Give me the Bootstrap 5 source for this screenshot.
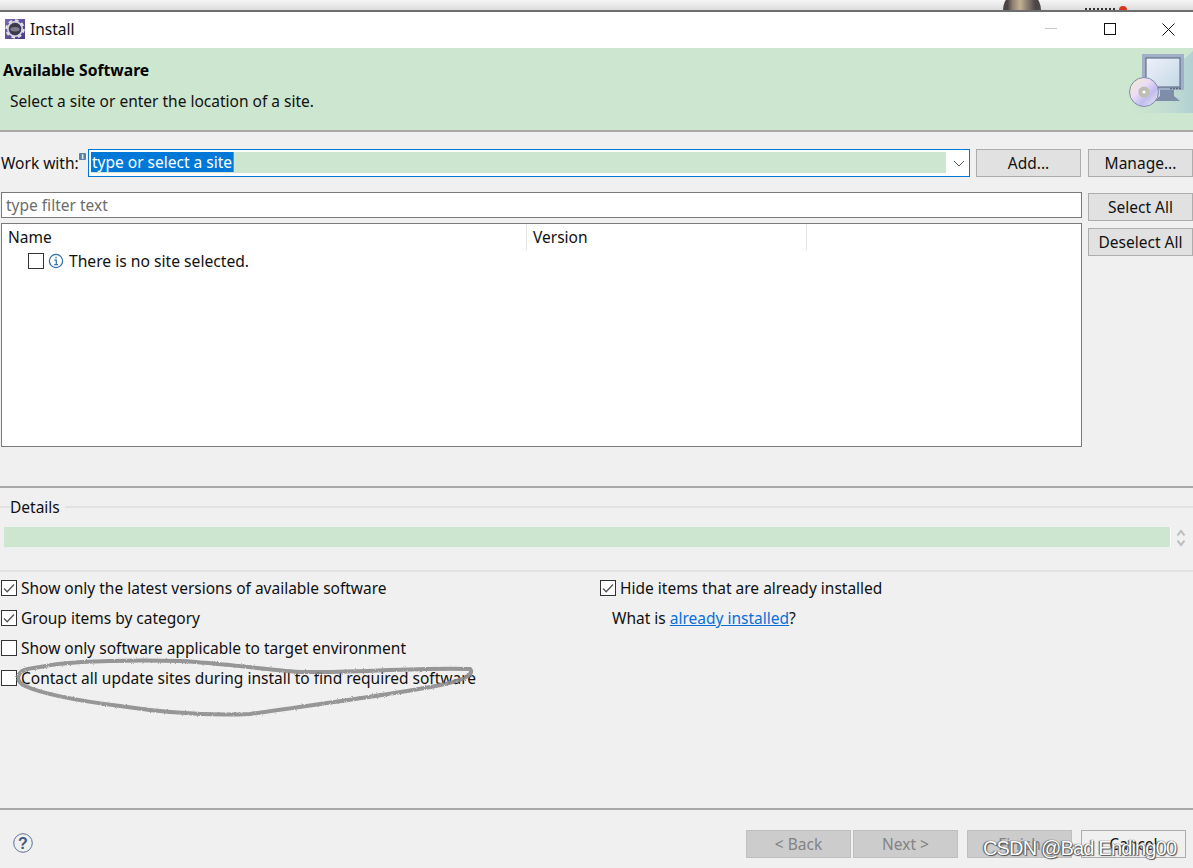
<!DOCTYPE html>
<html lang="en">
<head>
<meta charset="utf-8">
<title>Install</title>
<link href="https://cdn.jsdelivr.net/npm/bootstrap@5.3.0/dist/css/bootstrap.min.css" rel="stylesheet">
<style>
html,body{height:868px;overflow:hidden}
body{background:#f0f0f0;font-family:"Noto Sans","Open Sans",sans-serif;font-size:15.5px;line-height:20px;color:#111;width:1193px;position:relative}
.topstrip{height:10px;background:linear-gradient(#f6f6f6,#dcdcdc);overflow:hidden;padding-left:1003px}
.avatar{width:38px;height:38px;border-radius:50%;background:linear-gradient(90deg,#4a4442 0 12%,#8d7f70 25%,#c4b294 45%,#8f8476 62%,#4c4646 85%);flex:none;margin-top:-9px}
.strokes{margin-left:44px;margin-top:8px;width:31px;height:2px;background:repeating-linear-gradient(90deg,#333 0 2px,transparent 2px 4px)}
.reddot{width:8px;height:8px;border-radius:50%;background:#d8361e;margin-top:6px;margin-left:3px;flex:none}
.titlebar{height:38px;background:#fff;border-top:2px solid #6e6e6e;padding:0 0 2px 5px}
.titlebar .ttl{margin-left:5px}
.winbtn{width:59px;height:36px;flex:none}
.winlast{margin-right:-5px}
.banner{height:84px;background:#cde6cf;border-bottom:2px solid #a9a9a9;padding:11px 0 0 3px}
.banner h1{font-size:15.7px;line-height:22px;font-weight:700;margin:0;color:#000}
.banner p{margin:10px 0 0 7px;line-height:20px}
.wizard-art{right:0;top:3px}
.workrow{height:28px;margin-top:17px;padding-left:1px}
.lbl{width:87px;position:relative;flex:none}
.infotag{position:absolute;left:78px;top:0;width:7px;height:7px;background:#5b7fa6;color:#fff;font-size:7px;line-height:7px;text-align:center;font-weight:700;border-radius:1px}
.combo{width:882px;height:28px;background:#fff;border:1px solid #0078d7;padding:2px 23px 3px 2px;position:relative;flex:none}
.combo-in{background:#cde6cf;height:21px;line-height:21px}
.sel{background:#0078d7;color:#fff;display:inline-block;padding:0 1px;border-right:1px solid #e8701a;height:20px}
.chev{position:absolute;right:4px;top:10px}
.wbtn{background:#e1e1e1;border:1px solid #adadad;border-radius:0;width:105px;height:28px;padding:0;font-size:15.5px;line-height:26px;color:#111;flex:none}
.wbtn.dis,.wbtn.dis:disabled{background:#ccc;border-color:#bfbfbf;color:#838383;opacity:1}
.wbtn.ghost{background:transparent}
.ml6{margin-left:6px}
.ml7{margin-left:7px}
.listarea{margin-top:15px;padding-left:1px}
.leftcol{width:1081px}
.filter{height:26px;width:1081px;background:#fff;border:1px solid #7a7a7a;padding:0 4px;line-height:24px;color:#6d6d6d}
.tree{height:224px;margin-top:5px;background:#fff;border:1px solid #7a7a7a}
.thead{height:26px;line-height:26px}
.th1{width:525px;padding-left:6px;border-right:1px solid #e5e5e5}
.th2{width:280px;padding-left:6px;border-right:1px solid #e5e5e5}
.rowitem{padding-left:26px;height:22px}
.rowtxt{margin-left:5px;font-size:15.65px}
.rightcol{margin-left:6px;margin-top:1px;gap:7px}
.ckbox.form-check-input{width:16px;height:16px;margin:0;border:1px solid #333;border-radius:0;background-color:#fff;flex:none;box-shadow:none}
.ckbox.form-check-input:checked{background-color:#fff;border-color:#333;background-size:14px;background-repeat:no-repeat;background-position:center;background-image:url("data:image/svg+xml,%3Csvg xmlns='http://www.w3.org/2000/svg' viewBox='0 0 14 14'%3E%3Cpath d='M2 7.5l3.2 3.2L12 3.5' fill='none' stroke='%23555' stroke-width='1.3'/%3E%3C/svg%3E")}
.sep1{margin:39px 0 0;border:0;border-top:2px solid #a8a8a8;opacity:1}
.details{height:83px;margin-top:1px;border-bottom:2px solid #e2e2e2;position:relative}
.dleg{padding:7px 0 0 10px;height:20px;line-height:22px}
.dline{position:absolute;left:0;right:0;top:17px;border-top:2px solid #e2e2e2;z-index:0}
.dleg span{position:relative;z-index:1;background:#f0f0f0;padding-right:5px}
.dfield{margin:18px 0 0 4px;height:20px;width:1167px;background:#cde6cf;border-right:1px solid #fff}
.spin{position:absolute;right:7px;top:40px}
.opts{margin-top:1px;height:235px}
.optcol1{width:600px;padding-left:1px}
.optrow{height:30px;gap:4px}
.whatis{padding-left:12px}
.whatis a{color:#0a6fd8}
.sep2{margin:0;border:0;border-top:2px solid #a8a8a8;opacity:1}
.bottombar{height:58px;padding:20px 7px 0 13px}
.helpic{margin-top:3px}
.gap2px{gap:2px}
.mx9{margin:0 9px}
.overlay{position:absolute;left:0;top:0;pointer-events:none}
.wm{position:absolute;left:983px;top:836px;font-size:20px;line-height:24px;color:#fff;letter-spacing:-.83px;font-family:"Liberation Sans",sans-serif;text-shadow:0 0 1px #333,1px 1px 1px #555,-1px 0 1px #666;white-space:nowrap}
</style>
</head>
<body>
<div class="topstrip d-flex">
  <div class="avatar"></div><div class="strokes"></div><div class="reddot"></div>
</div>
<div class="titlebar d-flex align-items-center">
  <svg width="20" height="20" viewBox="0 0 20 20" aria-hidden="true">
    <defs><linearGradient id="pur" x1="0" y1="0" x2="1" y2="1"><stop offset="0" stop-color="#7a68b0"/><stop offset="1" stop-color="#4a3a84"/></linearGradient></defs>
    <rect width="20" height="20" fill="url(#pur)"/>
    <circle cx="10" cy="10" r="8.2" fill="none" stroke="#e2e2e6" stroke-width="3" stroke-dasharray="3.4 3"/>
    <circle cx="10" cy="10" r="7.2" fill="none" stroke="#d6d6dc" stroke-width="1.6"/>
    <circle cx="10" cy="10" r="6" fill="#3b3a48"/>
    <ellipse cx="10" cy="10.3" rx="4.6" ry="2.2" fill="#7d7c8c"/>
  </svg>
  <span class="ttl flex-grow-1">Install</span>
  <div class="winbtn d-flex align-items-center justify-content-center"><svg width="12" height="2"><path d="M0 .5h12" stroke="#c8c8c8"/></svg></div>
  <div class="winbtn d-flex align-items-center justify-content-center"><svg width="12" height="12"><rect x=".5" y=".5" width="11" height="11" fill="none" stroke="#111"/></svg></div>
  <div class="winbtn winlast d-flex align-items-center justify-content-center"><svg width="13" height="13"><path d="M.5.5l12 12M12.5.5l-12 12" stroke="#111"/></svg></div>
</div>
<div class="banner position-relative">
  <h1>Available Software</h1>
  <p>Select a site or enter the location of a site.</p>
  <svg class="wizard-art position-absolute" width="66" height="62" viewBox="0 0 66 62" aria-hidden="true">
    <defs>
      <linearGradient id="scr" x1="0" y1="0" x2="1" y2="1"><stop offset="0" stop-color="#eef1fb"/><stop offset="1" stop-color="#c4d8e6"/></linearGradient>
      <linearGradient id="cd" x1="0" y1="0" x2="1" y2="1"><stop offset="0" stop-color="#f0efc0"/><stop offset=".4" stop-color="#ecdcf6"/><stop offset=".65" stop-color="#c0bcec"/><stop offset="1" stop-color="#f0f2f4"/></linearGradient>
      <linearGradient id="fade" x1="0" y1="0" x2="1" y2="0"><stop offset="0" stop-color="#c4dfd0" stop-opacity="0"/><stop offset="1" stop-color="#b2d0d4"/></linearGradient>
    </defs>
    <path d="M0 62L24 38 66 0v62z" fill="url(#fade)"/>
    <path d="M33 39h14v6l6 5H27l6-5z" fill="#7e8ea8"/>
    <rect x="15" y="3" width="42" height="36" fill="#a0aec6"/>
    <rect x="19" y="7" width="34" height="29" fill="url(#scr)" stroke="#54607c"/>
    <path d="M43 37.5h12" stroke="#5a6880" stroke-width="1.6" stroke-dasharray="2 1"/>
    <circle cx="17" cy="41" r="14.5" fill="url(#cd)" stroke="#7e8cab"/>
    <circle cx="17" cy="41" r="5.6" fill="#bdbdb4"/>
    <circle cx="17" cy="41" r="1.6" fill="#fff"/>
  </svg>
</div>
<div class="workrow d-flex align-items-center">
  <div class="lbl">Work with:<span class="infotag">i</span></div>
  <div class="combo">
    <div class="combo-in"><span class="sel">type or select a site</span></div>
    <svg class="chev" width="12" height="7" viewBox="0 0 12 7"><path d="M1 1l5 5 5-5" fill="none" stroke="#555"/></svg>
  </div>
  <button type="button" class="btn wbtn ml6">Add...</button>
  <button type="button" class="btn wbtn ml7">Manage...</button>
</div>
<div class="listarea d-flex">
  <div class="leftcol">
    <div class="filter">type filter text</div>
    <div class="tree">
      <div class="thead d-flex"><div class="th1">Name</div><div class="th2">Version</div></div>
      <div class="rowitem d-flex align-items-center">
        <input class="form-check-input ckbox" type="checkbox" aria-label="There is no site selected">
        <svg class="ms-1" width="16" height="16" viewBox="0 0 16 16"><circle cx="8" cy="8" r="6.6" fill="none" stroke="#2f6fa8" stroke-width="1.2"/><path d="M8 3.8v1.6M6.4 7.1H8.3v4.2M6.3 11.6h3.6" fill="none" stroke="#2f6fa8" stroke-width="1.2"/></svg>
        <span class="rowtxt">There is no site selected.</span>
      </div>
    </div>
  </div>
  <div class="rightcol d-flex flex-column">
    <button type="button" class="btn wbtn">Select All</button>
    <button type="button" class="btn wbtn">Deselect All</button>
  </div>
</div>
<hr class="sep1">
<div class="details">
  <div class="dline"></div>
  <div class="dleg"><span>Details</span></div>
  <div class="dfield"></div>
  <svg class="spin" width="10" height="18" viewBox="0 0 10 18"><path d="M1.5 6.5L5 2l3.5 4.5M1.5 11.5L5 16l3.5-4.5" fill="none" stroke="#bcbcbc" stroke-width="2"/></svg>
</div>
<div class="opts d-flex">
  <div class="optcol1">
    <div class="optrow d-flex align-items-center"><input class="form-check-input ckbox" type="checkbox" checked aria-label="latest"><span>Show only the latest versions of available software</span></div>
    <div class="optrow d-flex align-items-center"><input class="form-check-input ckbox" type="checkbox" checked aria-label="group"><span>Group items by category</span></div>
    <div class="optrow d-flex align-items-center"><input class="form-check-input ckbox" type="checkbox" aria-label="target"><span>Show only software applicable to target environment</span></div>
    <div class="optrow d-flex align-items-center"><input class="form-check-input ckbox" type="checkbox" aria-label="contact"><span>Contact all update sites during install to find required software</span></div>
  </div>
  <div class="optcol2">
    <div class="optrow d-flex align-items-center"><input class="form-check-input ckbox" type="checkbox" checked aria-label="hide"><span>Hide items that are already installed</span></div>
    <div class="optrow d-flex align-items-center whatis"><span>What is <a href="#">already installed</a>?</span></div>
  </div>
</div>
<hr class="sep2">
<div class="bottombar d-flex">
  <svg class="helpic" width="20" height="20" viewBox="0 0 20 20"><circle cx="10" cy="10" r="9.3" fill="none" stroke="#5a7296" stroke-width="1"/><text x="10" y="15.8" text-anchor="middle" font-family="Liberation Sans" font-weight="700" font-size="16" fill="#42587c">?</text></svg>
  <div class="ms-auto d-flex gap2px">
    <button type="button" class="btn wbtn dis" disabled>&lt; Back</button>
    <button type="button" class="btn wbtn dis" disabled>Next &gt;</button>
  </div>
  <button type="button" class="btn wbtn dis mx9" disabled>Finish</button>
  <button type="button" class="btn wbtn ghost">Cancel</button>
</div>
<svg class="overlay" width="1193" height="868" aria-hidden="true">
  <defs><filter id="rough" x="-5%" y="-20%" width="110%" height="140%"><feTurbulence type="fractalNoise" baseFrequency="1.1" numOctaves="2" result="n"/><feDisplacementMap in="SourceGraphic" in2="n" scale="2.5"/></filter></defs>
  <path d="M40 667C70 661 130 660 180 661 220 663 260 669 300 672 350 673 420 667 470 669 474 673 468 679 445 684 410 692 340 701 250 714 210 716 160 712 120 706 80 701 45 695 25 686 17 682 16 676 22 671 27 668 34 668 40 667" fill="none" stroke="#8c8c8c" stroke-width="4" stroke-opacity=".9" filter="url(#rough)"/>
</svg>
<div class="wm">CSDN @Bad Ending00</div>
<script src="https://cdn.jsdelivr.net/npm/bootstrap@5.3.0/dist/js/bootstrap.bundle.min.js"></script>
</body>
</html>
